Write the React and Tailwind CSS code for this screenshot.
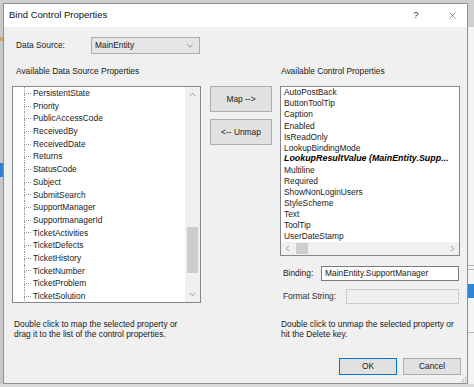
import { ChevronDown, ChevronUp, ChevronLeft, ChevronRight, X } from 'lucide-react';

const SOURCE_PROPS = [
  'PersistentState',
  'Priority',
  'PublicAccessCode',
  'ReceivedBy',
  'ReceivedDate',
  'Returns',
  'StatusCode',
  'Subject',
  'SubmitSearch',
  'SupportManager',
  'SupportmanagerId',
  'TicketActivities',
  'TicketDefects',
  'TicketHistory',
  'TicketNumber',
  'TicketProblem',
  'TicketSolution',
];

const CONTROL_PROPS = [
  'AutoPostBack',
  'ButtonToolTip',
  'Caption',
  'Enabled',
  'IsReadOnly',
  'LookupBindingMode',
  'LookupResultValue (MainEntity.Supp...',
  'Multiline',
  'Required',
  'ShowNonLoginUsers',
  'StyleScheme',
  'Text',
  'ToolTip',
  'UserDateStamp',
];

function WinButton({ children, className = '' }) {
  return (
    <div className={`flex items-center justify-center bg-[#e1e1e1] border border-[#adadad] text-[#1a1a1a] ${className}`}>
      {children}
    </div>
  );
}

export default function App() {
  return (
    <div className="w-[474px] h-[387px] overflow-hidden bg-[#d6d6d6] flex flex-col font-['Liberation_Sans',Arial,sans-serif] text-[8.4px] text-[#1a1a1a]">
      {/* strip of the window behind */}
      <div className="h-[3px] bg-[#cfcfcf]" />

      <div className="flex h-[381px]">
        {/* left edge of background app */}
        <div className="w-[3px] flex flex-col bg-[#c9c9c9]">
          <div className="h-[34px]" />
          <div className="h-[4px] bg-[#d9a066]" />
          <div className="h-[122px]" />
          <div className="h-[14px] bg-[#2f7fd0]" />
        </div>

        {/* Dialog */}
        <div className="w-[465px] h-[381px] border border-[#8f8f8f] bg-[#f0f0f0] flex flex-col">
          {/* Title bar */}
          <div className="h-[23px] bg-white flex items-center pl-[5px] pr-[8px] shrink-0">
            <span className="text-[9.5px] text-[#111]">Bind Control Properties</span>
            <span className="ml-auto w-[14px] text-center text-[9.5px] text-[#333]">?</span>
            <span className="ml-[22px] w-[14px] flex justify-center">
              <X size={11} strokeWidth={1} className="text-[#222]" />
            </span>
          </div>

          {/* Data source row */}
          <div className="mt-[10px] flex items-center h-[17px] pl-[12px]">
            <span className="w-[75px]">Data Source:</span>
            <div className="w-[109px] h-[17px] bg-[#e5e5e5] border border-[#adadad] flex items-center justify-between pl-[3px] pr-[4px]">
              <span>MainEntity</span>
              <ChevronDown size={10} strokeWidth={1.2} className="text-[#444]" />
            </div>
          </div>

          {/* Section labels */}
          <div className="mt-[12px] flex items-center h-[10px] pl-[12px]">
            <span className="w-[265px]">Available Data Source Properties</span>
            <span>Available Control Properties</span>
          </div>

          {/* Main area */}
          <div className="mt-[10px] flex pl-[8px]">
            {/* Source list */}
            <div className="w-[189px] h-[217px] bg-white border border-[#828790] flex">
              <div className="flex-1 overflow-hidden">
                {SOURCE_PROPS.map((p) => (
                  <div key={p} className="h-[12.7px] flex items-center whitespace-nowrap">
                    <div className="ml-[11px] w-[7px] self-stretch flex flex-col">
                      <div className="flex-1 border-l border-b border-dotted border-[#9a9a9a]" />
                      <div className="flex-1 border-l border-dotted border-[#9a9a9a]" />
                    </div>
                    <span className="ml-[2px]">{p}</span>
                  </div>
                ))}
              </div>
              <div className="w-[15px] bg-[#f0f0f0] flex flex-col">
                <div className="h-[15px] flex items-center justify-center">
                  <ChevronUp size={9} strokeWidth={1.6} className="text-[#555]" />
                </div>
                <div className="flex-1 flex flex-col px-[2px]">
                  <div className="mt-[125px] h-[46px] bg-[#cdcdcd]" />
                </div>
                <div className="h-[15px] flex items-center justify-center">
                  <ChevronDown size={9} strokeWidth={1.6} className="text-[#555]" />
                </div>
              </div>
            </div>

            {/* Map buttons */}
            <div className="ml-[9px] w-[62px] flex flex-col gap-[7px]">
              <WinButton className="h-[26px]">Map --&gt;</WinButton>
              <WinButton className="h-[26px]">&lt;-- Unmap</WinButton>
            </div>

            {/* Control list + binding */}
            <div className="ml-[8px] w-[180px] flex flex-col">
              <div className="h-[170px] bg-white border border-[#828790] flex flex-col">
                <div className="flex-1 overflow-hidden pl-[3px]">
                  {CONTROL_PROPS.map((p) => (
                    <div
                      key={p}
                      className={`h-[11.1px] flex items-center whitespace-nowrap ${
                        p.startsWith('LookupResultValue') ? 'font-bold italic text-black text-[8.9px]' : ''
                      }`}
                    >
                      {p}
                    </div>
                  ))}
                </div>
                <div className="h-[13px] bg-[#f0f0f0] flex items-center">
                  <div className="w-[13px] flex justify-center">
                    <ChevronLeft size={9} strokeWidth={1.6} className="text-[#555]" />
                  </div>
                  <div className="ml-[2px] w-[12px] h-[11px] bg-[#cdcdcd]" />
                  <div className="flex-1" />
                  <div className="w-[13px] flex justify-center">
                    <ChevronRight size={9} strokeWidth={1.6} className="text-[#555]" />
                  </div>
                </div>
              </div>

              <div className="mt-[10px] flex items-center h-[15px]">
                <span className="pl-[3px] w-[41px]">Binding:</span>
                <div className="w-[138px] h-[15px] bg-white border border-[#7a7a7a] flex items-center px-[3px] whitespace-nowrap">
                  MainEntity.SupportManager
                </div>
              </div>
              <div className="mt-[8px] flex items-center h-[15px]">
                <span className="pl-[3px] w-[66px] text-[#333]">Format String:</span>
                <div className="w-[113px] h-[15px] bg-[#f0f0f0] border border-[#cccccc]" />
              </div>
            </div>
          </div>

          {/* Help texts */}
          <div className="mt-[15px] flex pl-[10px] leading-[10px]">
            <div className="w-[267px]">
              <div>Double click to map the selected property or</div>
              <div>drag it to the list of the control properties.</div>
            </div>
            <div>
              <div>Double click to unmap the selected property or</div>
              <div>hit the Delete key.</div>
            </div>
          </div>

          {/* Dialog buttons */}
          <div className="mt-[19px] flex justify-end gap-[6px] pr-[6px]">
            <WinButton className="w-[58px] h-[17px] !border-[#0078d7]">OK</WinButton>
            <WinButton className="w-[58px] h-[17px]">Cancel</WinButton>
          </div>

          {/* resize grip */}
          <div className="mt-auto flex justify-end pr-[1px] pb-[1px]">
            <div className="grid grid-cols-3 gap-[1px]">
              <span className="w-[1px] h-[1px]" />
              <span className="w-[1px] h-[1px]" />
              <span className="w-[1px] h-[1px] bg-[#a0a0a0]" />
              <span className="w-[1px] h-[1px]" />
              <span className="w-[1px] h-[1px] bg-[#a0a0a0]" />
              <span className="w-[1px] h-[1px] bg-[#a0a0a0]" />
              <span className="w-[1px] h-[1px] bg-[#a0a0a0]" />
              <span className="w-[1px] h-[1px] bg-[#a0a0a0]" />
              <span className="w-[1px] h-[1px] bg-[#a0a0a0]" />
            </div>
          </div>
        </div>

        {/* right edge of background app */}
        <div className="flex-1 flex flex-col bg-[#f4f4f4]">
          <div className="h-[24px] bg-[#d0d0d0]" />
          <div className="h-[238px]" />
          <div className="h-[1px] bg-[#b5b5b5]" />
          <div className="h-[3px]" />
          <div className="h-[1px] bg-[#b5b5b5]" />
          <div className="h-[14px]" />
          <div className="h-[14px] bg-[#2f86d6]" />
          <div className="h-[34px]" />
          <div className="h-[1px] bg-[#b5b5b5]" />
        </div>
      </div>

      <div className="flex-1 bg-[#d9d9d9]" />
    </div>
  );
}
